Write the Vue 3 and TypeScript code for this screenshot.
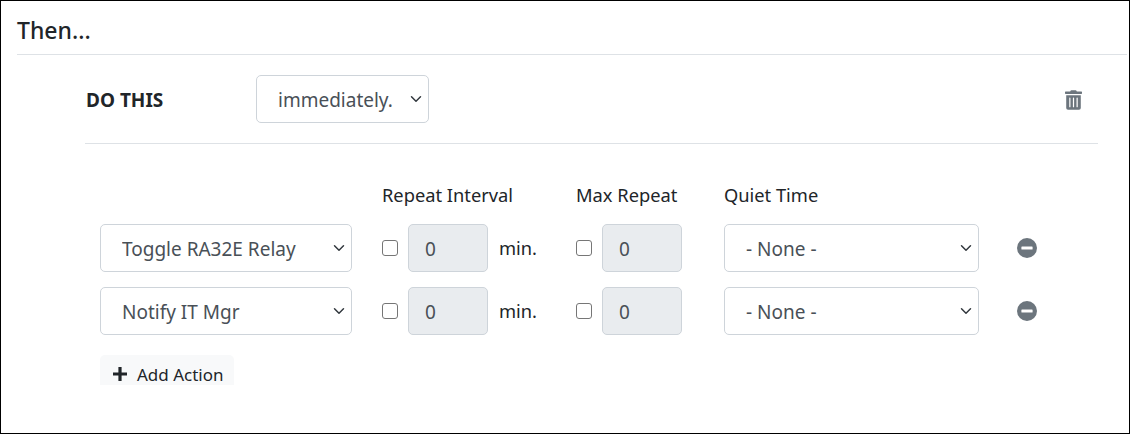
<script setup lang="ts">
type ActionRow = { id: number; action: string };

const rows: ActionRow[] = [
  { id: 1, action: 'Toggle RA32E Relay' },
  { id: 2, action: 'Notify IT Mgr' },
];
</script>

<template>
  <div class="panel">
    <h2 class="title">Then...</h2>
    <div class="body">
      <div class="do-row">
        <strong class="do-label">DO THIS</strong>
        <select class="field when">
          <option>immediately.</option>
        </select>
        <svg class="trash" viewBox="0 0 448 512" aria-hidden="true">
          <path d="M32 464a48 48 0 0 0 48 48h288a48 48 0 0 0 48-48V128H32zm272-256a16 16 0 0 1 32 0v224a16 16 0 0 1-32 0zm-96 0a16 16 0 0 1 32 0v224a16 16 0 0 1-32 0zm-96 0a16 16 0 0 1 32 0v224a16 16 0 0 1-32 0zM432 32H312l-9.4-18.7A24 24 0 0 0 281.1 0H166.8a23.72 23.72 0 0 0-21.4 13.3L136 32H16A16 16 0 0 0 0 48v32a16 16 0 0 0 16 16h416a16 16 0 0 0 16-16V48a16 16 0 0 0-16-16z" />
        </svg>
      </div>

      <div class="actions">
        <div class="grid head">
          <span></span>
          <span class="indent">Repeat Interval</span>
          <span class="indent">Max Repeat</span>
          <span>Quiet Time</span>
          <span></span>
        </div>
        <div v-for="row in rows" :key="row.id" class="grid line">
          <select class="field">
            <option>{{ row.action }}</option>
          </select>
          <div class="repeat indent">
            <input type="checkbox" class="check" />
            <input type="text" class="num" value="0" disabled />
            <span class="unit">min.</span>
          </div>
          <div class="repeat indent">
            <input type="checkbox" class="check" />
            <input type="text" class="num" value="0" disabled />
          </div>
          <select class="field">
            <option>- None -</option>
          </select>
          <svg class="minus" viewBox="0 0 20 20" aria-hidden="true">
            <path fill-rule="evenodd" d="M10 0a10 10 0 1 0 0 20a10 10 0 0 0 0-20zM5 8.4h10a.6.6 0 0 1 .6.6v2a.6.6 0 0 1-.6.6H5a.6.6 0 0 1-.6-.6V9a.6.6 0 0 1 .6-.6z" />
          </svg>
        </div>
        <button type="button" class="add">
          <svg class="plus" viewBox="0 0 16 16" aria-hidden="true">
            <path d="M6.4 1h3.2v5.4H15v3.2H9.6V15H6.4V9.6H1V6.4h5.4z" />
          </svg>
          Add Action
        </button>
      </div>
    </div>
  </div>
</template>

<style>
html,
body {
  margin: 0;
  background: #fff;
}
</style>

<style scoped>
.panel {
  box-sizing: border-box;
  width: 1130px;
  height: 434px;
  border: 1px solid #000;
  overflow: hidden;
  padding: 0 2px 0 16px;
  font-family: "Noto Sans", "Open Sans", sans-serif;
  font-size: 18.3px;
  color: #212529;
}
.title {
  margin: 0;
  height: 54px;
  box-sizing: border-box;
  padding-top: 13px;
  border-bottom: 1px solid #dee2e6;
  font-size: 23px;
  line-height: 32px;
  font-weight: 500;
}
.body {
  padding: 20px 29px 0 68px;
}
.do-row {
  display: flex;
  align-items: center;
  height: 69px;
  padding-bottom: 20px;
  box-sizing: border-box;
  border-bottom: 1px solid #dee2e6;
}
.do-label {
  width: 171px;
  padding: 2px 0 0 1px;
  box-sizing: border-box;
  font-size: 19px;
  font-weight: 700;
}
.field {
  appearance: none;
  box-sizing: border-box;
  width: 100%;
  height: 48px;
  padding: 2px 24px 0 21px;
  border: 1px solid #ced4da;
  border-radius: 5px;
  background-color: #fff;
  background-image: url("data:image/svg+xml,%3csvg xmlns='http://www.w3.org/2000/svg' viewBox='0 0 16 16'%3e%3cpath fill='none' stroke='%23343a40' stroke-linecap='round' stroke-linejoin='round' stroke-width='2' d='M2 5l6 6 6-6'/%3e%3c/svg%3e");
  background-repeat: no-repeat;
  background-position: right 5px center;
  background-size: 14px 12px;
  color: #495057;
  font-family: inherit;
  font-size: 19px;
}
.when {
  width: 173px;
}
.trash {
  width: 17px;
  height: 20px;
  margin: 2px 16px 0 auto;
  fill: #6c757d;
}
.actions {
  padding: 35px 0 0 15px;
}
.grid {
  display: grid;
  grid-template-columns: 252px 194px 178px 255px 58px;
  align-items: center;
}
.head {
  height: 31px;
  line-height: 31px;
  margin-bottom: 14px;
}
.line {
  height: 48px;
  margin-bottom: 15px;
}
.indent {
  padding-left: 30px;
}
.repeat {
  display: flex;
  align-items: center;
}
.check {
  appearance: none;
  box-sizing: border-box;
  width: 16px;
  height: 16px;
  margin: 0 10px 0 0;
  border: 1px solid #767676;
  border-radius: 3px;
  background: #fff;
}
.num {
  box-sizing: border-box;
  width: 80px;
  height: 48px;
  padding: 2px 16px 0;
  border: 1px solid #ced4da;
  border-radius: 5px;
  background: #e9ecef;
  color: #495057;
  font-family: inherit;
  font-size: 19px;
}
.unit {
  margin: -2px 0 0 11px;
}
.minus {
  width: 20px;
  height: 20px;
  margin-left: 38px;
  fill: #6c757d;
}
.add {
  display: flex;
  align-items: center;
  width: 134px;
  height: 30px;
  margin-top: 20px;
  padding: 8px 0 0 12px;
  box-sizing: border-box;
  border: 0;
  border-radius: 5px 5px 0 0;
  background: #f8f9fa;
  color: #212529;
  font-family: inherit;
  font-size: 17px;
  overflow: hidden;
}
.plus {
  width: 16px;
  height: 16px;
  margin-right: 9px;
  fill: #212529;
}
</style>
